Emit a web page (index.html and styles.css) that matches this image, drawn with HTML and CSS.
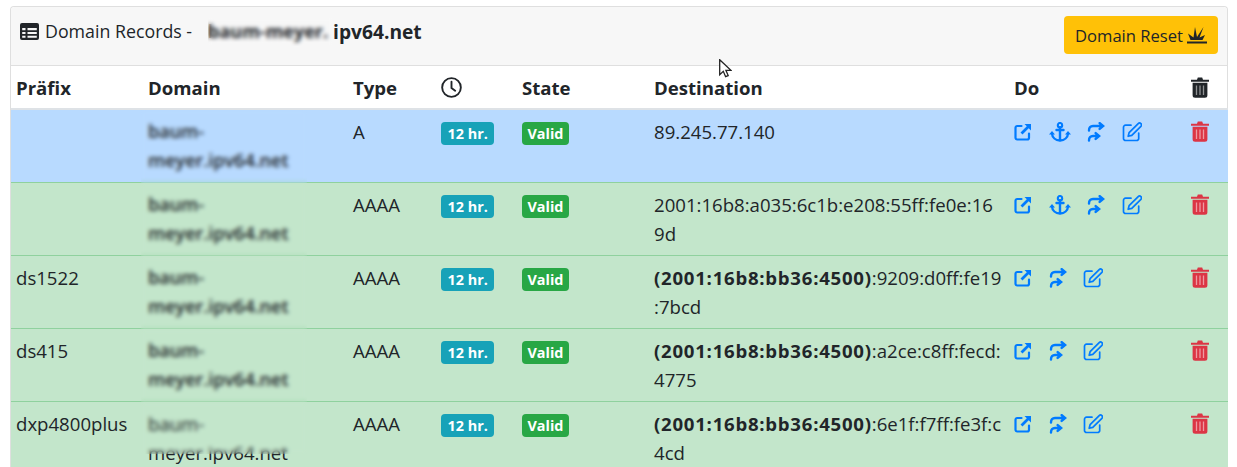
FILE: index.html
```html
<!DOCTYPE html>
<html lang="de">
<head>
<meta charset="utf-8">
<title>Domain Records</title>
<link rel="stylesheet" href="styles.css">
</head>
<body>
<svg class="defs" width="0" height="0">
  <defs>
    <symbol id="i-ext" viewBox="0 0 18 18"><path d="M7.500 3H3.200A1.700 1.700 0 0 0 1.500 4.700v10.100A1.700 1.700 0 0 0 3.200 16.500h10.100a1.700 1.700 0 0 0 1.700-1.700V10.500" fill="none" stroke="currentColor" stroke-width="2.200" stroke-linecap="round"/><path d="M10.500 1H17v6.500l-2.300-2.300-6.200 6.300-2-2 6.300-6.200z" fill="currentColor"/></symbol>
    <symbol id="i-anchor" viewBox="0 0 22 20"><circle cx="11" cy="3.200" r="2.200" fill="none" stroke="currentColor" stroke-width="2.100"/><path d="M11 5.500V18M7.500 8h7" fill="none" stroke="currentColor" stroke-width="2.400" stroke-linecap="round"/><path d="M3 11.500c.2 4 3.600 6.800 8 7 4.400-.2 7.800-3 8-7" fill="none" stroke="currentColor" stroke-width="2.400" stroke-linecap="round"/><path d="M0 12.500 3 9l3 3.500zM16 12.500 19 9l3 3.500z" fill="currentColor"/></symbol>
    <symbol id="i-shuffle" viewBox="0 0 18 20"><path d="M2 8.500C2 5.500 3.500 4 6 4h7M2 18.500C2 15.500 3.500 14 6 14h3.500" fill="none" stroke="currentColor" stroke-width="2.400" stroke-linecap="round"/><path d="M11.800.2a1.200 1.200 0 0 1 1.700 0L18 4l-4.500 3.800a1.200 1.200 0 0 1-1.700-1.700L13.500 4l-1.700-2.100a1.200 1.200 0 0 1 0-1.700zM7.800 10.200a1.200 1.200 0 0 1 1.700 0L14 14l-4.500 3.800a1.200 1.200 0 0 1-1.700-1.700L9.500 14l-1.700-2.100a1.200 1.200 0 0 1 0-1.700z" fill="currentColor"/></symbol>
    <symbol id="i-edit" viewBox="0 0 20 20"><path d="M9 3.200H3.600A2.100 2.100 0 0 0 1.500 5.300v11.100a2.100 2.100 0 0 0 2.100 2.100h11a2.100 2.100 0 0 0 2.100-2.100V11" fill="none" stroke="currentColor" stroke-width="1.700" stroke-linecap="round"/><path d="M16.200 1.600a1.900 1.900 0 0 1 2.700 2.700L9.800 13.400 6.200 14.300l.9-3.600z" fill="none" stroke="currentColor" stroke-width="1.700" stroke-linejoin="round"/></symbol>
    <symbol id="i-trash" viewBox="0 0 18 21"><path d="M0 2.800h18v2H0zM6 2.800l.8-2.300h4.400l.8 2.300z" fill="currentColor"/><path d="M1.600 5.800h14.800v12.400a2.500 2.500 0 0 1-2.500 2.500H4.100a2.500 2.500 0 0 1-2.500-2.500z" fill="currentColor"/><path d="M5.500 8.500v9.500M9 8.500v9.500M12.500 8.500v9.500" stroke="#fff" stroke-opacity=".5" stroke-width="1.300" fill="none"/></symbol>
  </defs>
</svg>
<section class="card">
  <header class="card-head">
    <h1 class="card-title">
      <svg class="ico-table" viewBox="0 0 19 17"><path fill-rule="evenodd" d="M2 0h15a2 2 0 0 1 2 2v13a2 2 0 0 1-2 2H2a2 2 0 0 1-2-2V2a2 2 0 0 1 2-2zM2.200 5v2.200h3.300V5zM7.500 5v2.200h9.300V5zM2.200 9v2h3.300V9zM7.500 9v2h9.300V9zM2.200 12.800v2h3.300v-2zM7.500 12.800v2h9.300v-2z" fill="currentColor"/></svg>
      <span>Domain Records -</span>
      <span class="host"><b class="host-name">baum-meyer.<i class="patch patch-host"></i></b><b>ipv64.net</b></span>
    </h1>
    <button class="reset">Domain Reset
      <svg class="ico-blast" viewBox="0 0 20 18"><path d="M0 15.500h20v2H0zM3.500 14 1 7.500l5.500 4L8 1l2 10L16.500 1l-4 10.500L18 9l-2.500 5z" fill="currentColor"/></svg>
    </button>
  </header>
  <table class="records">
    <colgroup><col class="c1"><col class="c2"><col class="c3"><col class="c4"><col class="c5"><col class="c6"><col class="c7"><col class="c8"></colgroup>
    <thead>
      <tr>
        <th>Präfix</th><th>Domain</th><th>Type</th>
        <th><svg class="ico-clock" viewBox="0 0 20 20"><circle cx="10" cy="10" r="8.900" fill="none" stroke="currentColor" stroke-width="1.800"/><path d="M10 4.500V10.500l3.500 2.500" fill="none" stroke="currentColor" stroke-width="1.800" stroke-linecap="round"/></svg></th>
        <th>State</th><th>Destination</th><th>Do</th>
        <th class="th-del"><svg class="ico ico-del"><use href="#i-trash"/></svg></th>
      </tr>
    </thead>
    <tbody>
      <tr class="blue">
        <td></td>
        <td class="dom">baum-<br>meyer.ipv64.net<i class="patch"></i></td>
        <td>A</td>
        <td><span class="badge teal">12 hr.</span></td>
        <td><span class="badge green">Valid</span></td>
        <td class="dest">89.245.77.140</td>
        <td><div class="acts"><svg class="ico a-ext"><use href="#i-ext"/></svg><svg class="ico a-anc"><use href="#i-anchor"/></svg><svg class="ico a-shu"><use href="#i-shuffle"/></svg><svg class="ico a-edit"><use href="#i-edit"/></svg></div></td>
        <td class="del"><svg class="ico ico-del"><use href="#i-trash"/></svg></td>
      </tr>
      <tr class="grn">
        <td></td>
        <td class="dom">baum-<br>meyer.ipv64.net<i class="patch"></i></td>
        <td>AAAA</td>
        <td><span class="badge teal">12 hr.</span></td>
        <td><span class="badge green">Valid</span></td>
        <td class="dest">2001:16b8:a035:6c1b:e208:55ff:fe0e:16<br>9d</td>
        <td><div class="acts"><svg class="ico a-ext"><use href="#i-ext"/></svg><svg class="ico a-anc"><use href="#i-anchor"/></svg><svg class="ico a-shu"><use href="#i-shuffle"/></svg><svg class="ico a-edit"><use href="#i-edit"/></svg></div></td>
        <td class="del"><svg class="ico ico-del"><use href="#i-trash"/></svg></td>
      </tr>
      <tr class="grn">
        <td>ds1522</td>
        <td class="dom">baum-<br>meyer.ipv64.net<i class="patch"></i></td>
        <td>AAAA</td>
        <td><span class="badge teal">12 hr.</span></td>
        <td><span class="badge green">Valid</span></td>
        <td class="dest"><b>(2001:16b8:bb36:4500)</b>:9209:d0ff:fe19<br>:7bcd</td>
        <td><div class="acts"><svg class="ico a-ext"><use href="#i-ext"/></svg><svg class="ico a-shu"><use href="#i-shuffle"/></svg><svg class="ico a-edit"><use href="#i-edit"/></svg></div></td>
        <td class="del"><svg class="ico ico-del"><use href="#i-trash"/></svg></td>
      </tr>
      <tr class="grn">
        <td>ds415</td>
        <td class="dom">baum-<br>meyer.ipv64.net<i class="patch"></i></td>
        <td>AAAA</td>
        <td><span class="badge teal">12 hr.</span></td>
        <td><span class="badge green">Valid</span></td>
        <td class="dest"><b>(2001:16b8:bb36:4500)</b>:a2ce:c8ff:fecd:<br>4775</td>
        <td><div class="acts"><svg class="ico a-ext"><use href="#i-ext"/></svg><svg class="ico a-shu"><use href="#i-shuffle"/></svg><svg class="ico a-edit"><use href="#i-edit"/></svg></div></td>
        <td class="del"><svg class="ico ico-del"><use href="#i-trash"/></svg></td>
      </tr>
      <tr class="grn">
        <td>dxp4800plus</td>
        <td class="dom dom-tail">baum-<br>meyer.ipv64.net<i class="patch patch-short"></i></td>
        <td>AAAA</td>
        <td><span class="badge teal">12 hr.</span></td>
        <td><span class="badge green">Valid</span></td>
        <td class="dest"><b>(2001:16b8:bb36:4500)</b>:6e1f:f7ff:fe3f:c<br>4cd</td>
        <td><div class="acts"><svg class="ico a-ext"><use href="#i-ext"/></svg><svg class="ico a-shu"><use href="#i-shuffle"/></svg><svg class="ico a-edit"><use href="#i-edit"/></svg></div></td>
        <td class="del"><svg class="ico ico-del"><use href="#i-trash"/></svg></td>
      </tr>
    </tbody>
  </table>
</section>
<svg class="cursor" viewBox="0 0 13 19"><path d="M.7.700v15l3.600-3.400 2.300 5.400 2.600-1.100-2.300-5.300h5z" fill="#fff" stroke="#222" stroke-width="1.300"/></svg>
</body>
</html>
```
FILE: styles.css
```css
html, body { margin: 0; height: 467px; overflow: hidden; background: #fff; }
body {
  position: relative;
  padding: 6px 9px 0 10px;
  box-sizing: border-box;
  font-family: "Open Sans", "Noto Sans", sans-serif;
  font-size: 18.600px;
  line-height: 29px;
  color: #212529;
}
.defs { position: absolute; }
.card {
  border: 1px solid #dfdfdf;
  border-bottom: 0;
  border-radius: 4px 4px 0 0;
}
.card-head {
  display: flex;
  align-items: flex-start;
  justify-content: space-between;
  height: 49px;
  padding: 9px 9px 0 9px;
  background: #f7f7f7;
  border-bottom: 1px solid #dfdfdf;
  border-radius: 4px 4px 0 0;
}
.card-title {
  display: flex;
  align-items: center;
  gap: 6px;
  margin: 1px 0 0;
  font-size: 17.800px;
  font-weight: 400;
  line-height: 29px;
}
.ico-table { width: 19px; height: 17px; }
.host { margin-left: 10px; white-space: nowrap; font-size: 19.200px; }
.host-name { position: relative; display: inline-block; width: 125px; font-size: 18px; vertical-align: top; }
.patch {
  position: absolute;
  backdrop-filter: blur(2.200px);
}
.patch-host { left: 0; top: 0; right: 0; bottom: 0; }
.reset {
  display: flex;
  align-items: center;
  gap: 4px;
  height: 38px;
  width: 154px;
  justify-content: center;
  padding: 0;
  border: 0;
  border-radius: 4px;
  background: #ffc107;
  color: #212529;
  font: inherit;
  font-size: 16.600px;
}
.ico-blast { width: 20px; height: 18px; }
.records {
  width: 1217px;
  border-collapse: collapse;
  table-layout: fixed;
}
.c1 { width: 131px; } .c2 { width: 205px; } .c3 { width: 88px; } .c4 { width: 81px; }
.c5 { width: 132px; } .c6 { width: 360px; } .c7 { width: 177px; } .c8 { width: 43px; }
th {
  height: 42px;
  padding: 0 6px;
  text-align: left;
  font-weight: 700;
  border-bottom: 2px solid #dee2e6;
}
th:first-child, td:first-child { padding-left: 5px; }
.ico-clock { display: block; width: 21px; height: 21px; }
td {
  height: 58px;
  padding: 7px 6px;
  vertical-align: top;
  border-top: 1px solid #8fd19e;
}
.blue td { background: #b8daff; border-top: 0; }
.grn td { background: #c3e6cb; }
.dom { position: relative; font-size: 18px; font-weight: 600; }
.dom-tail { font-size: 18.600px; font-weight: 400; }
.dom .patch { left: -1px; top: 0; width: 166px; bottom: -1px; }
.dom .patch-short { bottom: 20px; }
td.dest { padding-right: 0; white-space: nowrap; }
.dest b { letter-spacing: .75px; }
.badge {
  display: inline-block;
  height: 23px;
  margin-top: 5px;
  border-radius: 4px;
  color: #fff;
  font-size: 14.400px;
  font-weight: 700;
  line-height: 23px;
  vertical-align: top;
}
.green { padding: 0 5.500px; background: #28a745; }
.teal { padding: 0 6.500px; background: #17a2b8; }
.acts { display: flex; align-items: center; gap: 16.500px; margin-top: 5px; color: #007bff; }
.ico { display: block; }
.a-ext { width: 18px; height: 18px; }
.a-anc { width: 22px; height: 20px; }
.a-shu { width: 18px; height: 20px; }
.a-edit { width: 20px; height: 20px; }
.ico-del { width: 18px; height: 21px; }
.del { color: #dc3545; }
.del .ico { margin-top: 4px; }
.cursor { position: absolute; left: 719px; top: 59px; width: 13px; height: 19px; }
```
